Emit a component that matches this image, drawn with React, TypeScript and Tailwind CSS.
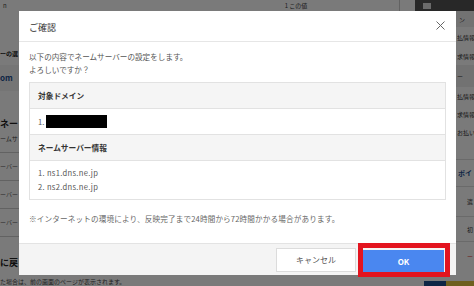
import React from 'react';

const jp = "font-['Noto_Sans_CJK_JP',sans-serif]";

// faint page rows visible at the left edge behind the dialog
const LeftColumn: React.FC = () => (
  <div className="w-[19px] flex flex-col overflow-hidden whitespace-nowrap text-[#222]">
    <div className="h-[30px]" />
    <div className="h-[24px] flex items-center text-[6px] font-bold">ーの選</div>
    <div className="h-[26px] flex items-center text-[8px] font-bold text-[#1d4f91] bg-[#f4f4f4]">om</div>
    <div className="h-[24px]" />
    <div className="h-[18px] flex items-center text-[9px] font-bold">ネー</div>
    <div className="h-[10px] flex items-center text-[6px] text-[#444]">ームサ</div>
    <div className="h-[9px]" />
    {['ーバー', 'ーバー', 'ーバー'].map((t, i) => (
      <div key={i} className="h-[28px] flex items-center text-[6px] text-[#555] border-t border-[#ccc]">
        {t}
      </div>
    ))}
    <div className="h-[19px] border-t border-[#ccc]" />
    <div className="h-[16px] flex items-center text-[9px] font-bold">に戻</div>
  </div>
);

const RightColumn: React.FC = () => (
  <div className="w-[50px] flex flex-col overflow-hidden whitespace-nowrap text-[6px] text-[#333] border-l border-[#ddd]">
    <div className="h-[16px] flex items-center pl-[34px] bg-[#eee]">ン</div>
    <div className="h-[20px] flex items-center pl-[32px]">払情報</div>
    <div className="h-[18px] flex items-center pl-[32px]">求情報</div>
    <div className="h-[22px] flex items-center pl-[32px] bg-[#eee]">ー</div>
    <div className="h-[18px] flex items-center pl-[32px]">払情報</div>
    <div className="h-[18px] flex items-center pl-[32px]">求情報</div>
    <div className="h-[18px] flex items-center pl-[32px]">お払い</div>
    <div className="h-[19px] border-b border-[#ddd]" />
    <div className="h-[26px] flex items-center pl-[33px] text-[7px] font-bold text-[#1d4f91]">ポイ</div>
    <div className="h-[30px] flex items-center pl-[42px] border-t border-[#ddd]">遣</div>
    <div className="h-[25px] flex items-center pl-[42px] border-t border-[#ddd]">初</div>
    <div className="h-[29px] flex items-center pl-[42px] border-t border-[#ddd] text-[#d33]">ー</div>
  </div>
);

const Dialog: React.FC = () => (
  <div className={`absolute left-[19px] top-[11px] w-[437px] h-[264px] bg-white flex flex-col ${jp}`}>
    {/* header */}
    <div className="h-[31px] shrink-0 border-b border-[#e6e6e6] flex items-center justify-between pl-[10px] pr-[11px] pt-[4px]">
      <span className="text-[9px] text-[#333]">ご確認</span>
      <svg className="-mt-[6px]" width="9" height="9" viewBox="0 0 9 9">
        <path d="M0.5 0.5L8.5 8.5M8.5 0.5L0.5 8.5" stroke="#666" strokeWidth="1" />
      </svg>
    </div>

    {/* body */}
    <div className="flex-1 px-[10px] pt-[9px]">
      <p className="text-[7.6px] leading-[12.5px] text-[#555]">
        以下の内容でネームサーバーの設定をします。
        <br />
        よろしいですか？
      </p>

      <div className="mt-[6px] border border-[#e2e2e2]">
        <div className="h-[26px] bg-[#f5f5f5] border-b border-[#e2e2e2] flex items-center pl-[8px] text-[7.7px] font-bold text-[#333]">
          対象ドメイン
        </div>
        <div className="h-[26px] border-b border-[#e2e2e2] flex items-center pl-[8px] text-[7.6px] text-[#555]">
          <span>1.</span>
          <span className="ml-[2px] w-[61px] h-[13px] bg-black" />
        </div>
        <div className="h-[26px] bg-[#f5f5f5] border-b border-[#e2e2e2] flex items-center pl-[8px] text-[7.7px] font-bold text-[#333]">
          ネームサーバー情報
        </div>
        <div className="py-[5px] pl-[8px] text-[7.6px] leading-[14px] tracking-[0.3px] text-[#555]">
          <div>1. ns1.dns.ne.jp</div>
          <div>2. ns2.dns.ne.jp</div>
        </div>
      </div>

      <p className="mt-[13px] text-[7.6px] leading-[12px] tracking-[0.15px] text-[#666] whitespace-nowrap">
        ※インターネットの環境により、反映完了まで24時間から72時間かかる場合があります。
      </p>
    </div>

    {/* footer */}
    <div className="h-[32px] shrink-0 border-t border-[#e3e3e3] bg-[#f4f4f4] flex items-center justify-end gap-[7px] pr-[12px]">
      <button className="w-[80px] h-[24px] bg-white border border-[#dcdcdc] text-[8px] text-[#555]">
        キャンセル
      </button>
      <div className="relative">
        <button className="w-[81px] h-[24px] bg-[#4a87f0] text-white text-[8px] font-bold">OK</button>
        {/* red highlight annotation */}
        <div className="absolute left-[-5px] right-[-6px] top-[-3px] bottom-[-3px] border-[5px] border-[#e3141f]" />
      </div>
    </div>
  </div>
);

export default function App() {
  return (
    <div className={`relative w-[474px] h-[286px] overflow-hidden bg-white ${jp}`}>
      {/* page behind */}
      <div className="h-full flex flex-col">
        <div className="h-[11px] shrink-0 flex items-center text-[6px] text-[#444]">
          <span className="pl-[3px]">n</span>
          <span className="ml-[278px]">1 この値</span>
          <div className="ml-[92px] h-full border-l border-[#ccc]" />
          <div className="ml-[15px] h-full flex-1 bg-[#555] flex items-center pl-[8px]">
            <span className="w-[8px] h-[6px] bg-[#ddd]" />
          </div>
        </div>
        <div className="flex-1 flex">
          <LeftColumn />
          <div className="flex-1" />
          <RightColumn />
        </div>
        <div className="h-[10px] shrink-0 flex items-center text-[6px] text-[#444] whitespace-nowrap">
          <span>た場合は、前の画面のページが表示されます。</span>
          <div className="ml-auto w-[50px] h-[5px] self-end flex">
            <div className="w-[22px] bg-[#1d4f91]" />
            <div className="flex-1 bg-[#e7c640]" />
          </div>
        </div>
      </div>

      {/* dim overlay */}
      <div className="absolute inset-0 bg-black/[0.52]" />

      <Dialog />
    </div>
  );
}
